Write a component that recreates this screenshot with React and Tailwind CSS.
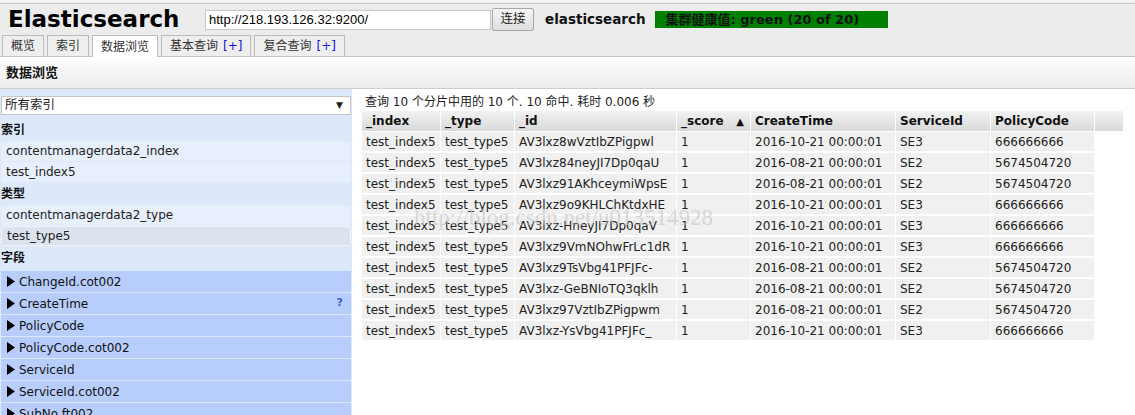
import React from 'react';

const FONT = { fontFamily: '"DejaVu Sans", "Noto Sans CJK SC", sans-serif' };

const tabs = [
  { label: '概览' },
  { label: '索引' },
  { label: '数据浏览', active: true },
  { label: '基本查询', plus: true },
  { label: '复合查询', plus: true },
];

const columns = [
  { key: 'index', label: '_index', w: 'w-[78px]' },
  { key: 'type', label: '_type', w: 'w-[73px]' },
  { key: 'id', label: '_id', w: 'w-[161px]' },
  { key: 'score', label: '_score', w: 'w-[73px]', sort: true },
  { key: 'time', label: 'CreateTime', w: 'w-[144px]' },
  { key: 'service', label: 'ServiceId', w: 'w-[94px]' },
  { key: 'policy', label: 'PolicyCode', w: 'w-[103px]' },
];

const rows = [
  ['AV3lxz8wVztIbZPigpwl', '2016-10-21 00:00:01', 'SE3', '666666666'],
  ['AV3lxz84neyJI7Dp0qaU', '2016-08-21 00:00:01', 'SE2', '5674504720'],
  ['AV3lxz91AKhceymiWpsE', '2016-08-21 00:00:01', 'SE2', '5674504720'],
  ['AV3lxz9o9KHLChKtdxHE', '2016-10-21 00:00:01', 'SE3', '666666666'],
  ['AV3lxz-HneyJI7Dp0qaV', '2016-10-21 00:00:01', 'SE3', '666666666'],
  ['AV3lxz9VmNOhwFrLc1dR', '2016-10-21 00:00:01', 'SE3', '666666666'],
  ['AV3lxz9TsVbg41PFJFc-', '2016-08-21 00:00:01', 'SE2', '5674504720'],
  ['AV3lxz-GeBNIoTQ3qklh', '2016-08-21 00:00:01', 'SE2', '5674504720'],
  ['AV3lxz97VztIbZPigpwm', '2016-08-21 00:00:01', 'SE2', '5674504720'],
  ['AV3lxz-YsVbg41PFJFc_', '2016-10-21 00:00:01', 'SE3', '666666666'],
];

const fields = [
  'ChangeId.cot002',
  'CreateTime',
  'PolicyCode',
  'PolicyCode.cot002',
  'ServiceId',
  'ServiceId.cot002',
  'SubNo.ft002',
];

function SectionTitle({ children }) {
  return <div className="h-[22px] flex items-center pl-[1px] text-[12px] font-bold text-[#111]">{children}</div>;
}

function Item({ children, selected }) {
  return (
    <div
      className={`h-[20px] mb-[1px] mx-[1px] flex items-center pl-[5px] rounded-[3px] text-[12px] text-[#222] ${
        selected ? 'bg-[#dbe3ef] border border-[#f2f6fc]' : 'bg-[#e7effc]'
      }`}
    >
      {children}
    </div>
  );
}

function Sidebar() {
  return (
    <div className="w-[352px] shrink-0 bg-[#dde9fb] pt-[7px]">
      <div className="mx-[1px] h-[19px] bg-white border border-[#c6c6c6] flex items-center justify-between pl-[3px] pr-[7px] text-[12.5px] text-[#222]">
        <span>所有索引</span>
        <span className="text-[9px]">▼</span>
      </div>
      <div className="mt-[4px]">
        <SectionTitle>索引</SectionTitle>
        <Item>contentmanagerdata2_index</Item>
        <Item>test_index5</Item>
        <div className="mt-[1px]">
          <SectionTitle>类型</SectionTitle>
        </div>
        <Item>contentmanagerdata2_type</Item>
        <Item selected>test_type5</Item>
        <SectionTitle>字段</SectionTitle>
        <div className="mt-[2px]">
          {fields.map((f) => (
            <div
              key={f}
              className="h-[21px] mb-[1px] ml-[1px] w-[350px] bg-[#b7cdfb] flex items-center pl-[6px] pr-[8px] text-[12px] text-[#111]"
            >
              <svg width="8" height="11" viewBox="0 0 8 11" className="mr-[4px]">
                <path d="M0 0 L8 5.5 L0 11 Z" fill="#000" />
              </svg>
              <span className="flex-1">{f}</span>
              {f === 'CreateTime' && <span className="text-[11px] font-bold text-[#3a5bd8]">?</span>}
            </div>
          ))}
        </div>
      </div>
    </div>
  );
}

function ResultTable() {
  return (
    <div className="relative pl-[10px] pt-[4px]">
      <div className="pl-[3px] h-[18px] flex items-center text-[12px] text-[#222]">
        查询 10 个分片中用的 10 个. 10 命中. 耗时 0.006 秒
      </div>
      <div className="flex gap-[1px]">
        {columns.map((c) => (
          <div
            key={c.key}
            className={`${c.w} h-[20px] bg-gradient-to-b from-[#f2f2f2] to-[#d9d9d9] flex items-center justify-between pl-[4px] pr-[6px] text-[12px] font-bold text-[#111]`}
          >
            <span>{c.label}</span>
            {c.sort && <span className="text-[10px]">▲</span>}
          </div>
        ))}
        <div className="w-[28px] h-[20px] bg-gradient-to-b from-[#f2f2f2] to-[#d9d9d9]" />
      </div>
      <div className="mt-[1px]">
        {rows.map((r, i) => (
          <div key={i} className="flex gap-[1px] mt-[2px] first:mt-0">
            {['test_index5', 'test_type5', r[0], '1', r[1], r[2], r[3]].map((v, j) => (
              <div
                key={j}
                className={`${columns[j].w} h-[19px] bg-[#f0f0f0] flex items-center pl-[4px] text-[12px] text-[#222] whitespace-nowrap overflow-hidden`}
              >
                {v}
              </div>
            ))}
          </div>
        ))}
      </div>
      <div
        className="absolute left-[62px] top-[112px] text-[23px] text-[#c4c4c4] opacity-60 pointer-events-none whitespace-nowrap"
        style={{ fontFamily: '"Liberation Serif", "DejaVu Serif", serif' }}
      >
        http://blog.csdn.net/u013514928
      </div>
    </div>
  );
}

export default function App() {
  return (
    <div className="w-[1135px] h-[415px] overflow-hidden bg-white" style={FONT}>
      <div className="h-[4px] bg-[#f4f4f4] border-b border-[#c8c8c8]" />
      <div className="bg-[#ececec] border-b border-[#c4c4c4]">
        <div className="h-[31px] flex items-center">
          <div className="pl-[8px] w-[205px] text-[23px] font-bold text-black leading-none">Elasticsearch</div>
          <div
            className="w-[286px] h-[20px] bg-white border border-[#c8c8c8] flex items-center pl-[3px] text-[13px] text-black"
            style={{ fontFamily: '"Liberation Sans", Arial, sans-serif' }}
          >
            http://218.193.126.32:9200/
          </div>
          <div className="ml-[1px] w-[42px] h-[23px] border border-[#a8a8a8] rounded-[2px] bg-gradient-to-b from-[#f6f6f6] to-[#dedede] flex items-center justify-center text-[12.5px] text-[#222]">
            连接
          </div>
          <div className="ml-[11px] text-[13.5px] font-bold text-[#111]">elasticsearch</div>
          <div className="ml-[9px] w-[233px] h-[17px] bg-[#008000] flex items-center pl-[11px] text-[13px] font-bold text-[#111]">
            集群健康值: green (20 of 20)
          </div>
        </div>
        <div className="flex items-end h-[21px] pl-[2px] gap-[3px]">
          {tabs.map((t) => (
            <div
              key={t.label}
              className={`h-[21px] px-[8px] flex items-center border border-b-0 border-[#bcbcbc] text-[12px] text-[#333] ${
                t.active ? 'bg-white h-[22px] -mb-[1px] relative' : 'bg-[#eeeeee]'
              }`}
            >
              {t.label}
              {t.plus && <span className="ml-[5px] text-[#1010e0]">[+]</span>}
            </div>
          ))}
        </div>
      </div>
      <div className="h-[32px] bg-gradient-to-b from-white to-[#ebebeb] border-b border-[#cfcfcf] flex items-center pl-[6px] text-[13px] font-bold text-[#111]">
        数据浏览
      </div>
      <div className="flex">
        <Sidebar />
        <ResultTable />
      </div>
    </div>
  );
}
